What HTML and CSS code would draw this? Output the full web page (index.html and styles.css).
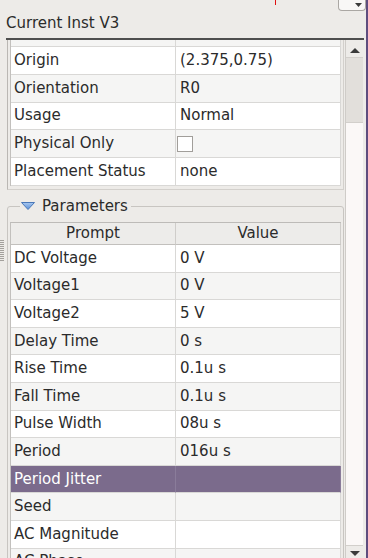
FILE: index.html
```html
<!DOCTYPE html>
<html lang="en">
<head>
    <meta charset="UTF-8">
    <title>Current Inst V3</title>
    <link rel="stylesheet" href="styles.css">
</head>
<body>
    <div class="window">
        <!--顶部下拉框-->
        <div class="topbar">
            <span class="tick"></span>
            <span class="combo">
                <svg width="7" height="4" viewBox="0 0 7 4"><polygon points="0,0 7,0 3.5,4" fill="#3a3a3a"/></svg>
            </span>
        </div>
        <div class="title">Current Inst V3</div>
        <div class="rule"></div>

        <div class="panel">
            <div class="grip-col"><div class="grip"></div></div>

            <div class="content">
                <!--实例属性-->
                <div class="props">
                    <table class="grid">
                        <tr class="stub alt"><td></td><td></td></tr>
                        <tr><td>Origin</td><td>(2.375,0.75)</td></tr>
                        <tr class="alt"><td>Orientation</td><td>R0</td></tr>
                        <tr><td>Usage</td><td>Normal</td></tr>
                        <tr class="alt"><td>Physical Only</td><td><span class="check"></span></td></tr>
                        <tr><td>Placement Status</td><td>none</td></tr>
                    </table>
                </div>

                <!--参数-->
                <fieldset class="group">
                    <legend>
                        <svg width="14" height="8" viewBox="0 0 14 8">
                            <defs>
                                <linearGradient id="tri" x1="0" y1="0" x2="0" y2="1">
                                    <stop offset="0" stop-color="#a9c8f0"/>
                                    <stop offset="1" stop-color="#5a8fd6"/>
                                </linearGradient>
                            </defs>
                            <polygon points="0.5,0.5 13.5,0.5 7,7.5" fill="url(#tri)" stroke="#4a78b8" stroke-width="1"/>
                        </svg>
                        Parameters
                    </legend>
                    <table class="grid params">
                        <tr class="head"><th>Prompt</th><th>Value</th></tr>
                        <tr><td>DC Voltage</td><td>0 V</td></tr>
                        <tr class="alt"><td>Voltage1</td><td>0 V</td></tr>
                        <tr><td>Voltage2</td><td>5 V</td></tr>
                        <tr class="alt"><td>Delay Time</td><td>0 s</td></tr>
                        <tr><td>Rise Time</td><td>0.1u s</td></tr>
                        <tr class="alt"><td>Fall Time</td><td>0.1u s</td></tr>
                        <tr><td>Pulse Width</td><td>08u s</td></tr>
                        <tr class="alt"><td>Period</td><td>016u s</td></tr>
                        <tr class="selected"><td>Period Jitter</td><td></td></tr>
                        <tr class="alt"><td>Seed</td><td></td></tr>
                        <tr><td>AC Magnitude</td><td></td></tr>
                        <tr class="alt"><td>AC Phase</td><td></td></tr>
                    </table>
                </fieldset>
            </div>

            <!--滚动条-->
            <div class="scrollbar">
                <div class="sb-up">
                    <svg width="10" height="5" viewBox="0 0 10 5"><polygon points="0,5 10,5 5,0" fill="#3a3a3a"/></svg>
                </div>
                <div class="sb-thumb"></div>
                <div class="sb-trough"></div>
                <div class="sb-down">
                    <svg width="10" height="5" viewBox="0 0 10 5"><polygon points="0,0 10,0 5,5" fill="#3a3a3a"/></svg>
                </div>
            </div>
        </div>
    </div>
</body>
</html>
```

FILE: styles.css
```css
*{
    margin: 0px;
    padding: 0px;
    box-sizing: border-box;
}
body{
    background-color: #edebe8;
    font-family: "DejaVu Sans", sans-serif;
    font-size: 15px;
    color: #2b2b2b;
}
.window{
    width: 368px;
    height: 558px;
    overflow: hidden;
    border-right: 2px solid #5e4d7e;
}

/*顶部*/
.topbar{
    height: 12px;
    display: flex;
}
.tick{
    width: 1px;
    height: 5px;
    margin-left: 275px;
    background-color: #e01010;
}
.combo{
    width: 28px;
    height: 11px;
    margin-left: auto;
    background-color: #f8f7f6;
    border: 1px solid #aaa7a3;
    border-top: none;
    border-radius: 0 0 4px 4px;
    display: flex;
    justify-content: flex-end;
    align-items: center;
    padding-right: 3px;
}
.title{
    height: 26px;
    padding-top: 2px;
    line-height: 18px;
    padding-left: 6px;
}
.rule{
    height: 2px;
    width: 358px;
    margin-left: 6px;
    background-color: #4e4e4e;
}

/*主体*/
.panel{
    height: 518px;
    display: flex;
}
.grip-col{
    width: 6px;
}
.grip{
    width: 4px;
    height: 22px;
    margin-top: 200px;
    background: repeating-linear-gradient(#a3a09c 0px, #a3a09c 1px, transparent 1px, transparent 2px);
}
.content{
    width: 339px;
    overflow: hidden;
}

/*表格*/
.grid{
    width: 331px;
    table-layout: fixed;
    border-collapse: separate;
    border-spacing: 0;
    border-left: 1px solid #c2c0bd;
    background-color: #fff;
}
.grid tr{
    height: 27.8px;
}
.params tr{
    height: 27.6px;
}
.grid td, .grid th{
    padding: 0 4px 0 3px;
    line-height: 17px;
    text-align: left;
    font-weight: normal;
    white-space: nowrap;
    overflow: hidden;
    border-right: 1px solid #d9d8d6;
    border-bottom: 1px solid #d9d8d6;
}
.grid td + td{
    padding-left: 4px;
}
.grid tr.alt td{
    background-color: #f5f5f4;
}
.grid tr.stub{
    height: 7px;
}
.grid tr.selected td{
    background-color: #7b6b8c;
    color: #fff;
    border-right-color: #8a7c9a;
}
.check{
    display: inline-block;
    width: 16px;
    height: 16px;
    margin-left: -3px;
    vertical-align: middle;
    background-color: #fff;
    border: 1px solid #a19e9a;
}
.props{
    width: 337px;
    margin-left: 1px;
    padding: 0 2px 3px 2px;
    border-left: 1px solid #bab7b3;
    border-right: 1px solid #d3d0cc;
    border-bottom: 1px solid #d3d0cc;
}

/*参数分组*/
.group{
    width: 337px;
    margin: 8px 0 0 1px;
    padding: 7px 2px 0 2px;
    border: 1px solid #c8c5c1;
    border-radius: 3px;
    min-width: 0;
}
.group legend{
    margin-left: 10px;
    padding: 0 3px 0 1px;
    line-height: 17px;
    display: flex;
    align-items: center;
    gap: 7px;
}
.params{
    border-top: 1px solid #bdbbb8;
}
.params tr.head{
    height: 22px;
}
.params tr.head th{
    text-align: center;
    padding: 0;
    background-color: #edecea;
    border-right-color: #cfcdca;
    border-bottom-color: #c2c0bd;
}

/*滚动条*/
.scrollbar{
    width: 18px;
    display: flex;
    flex-direction: column;
    border-left: 1px solid #cfccc8;
}
.sb-up{
    height: 17px;
    display: flex;
    justify-content: center;
    padding-top: 8px;
}
.sb-thumb{
    height: 66px;
    background-color: #e2dfdb;
    border-top: 1px solid #d2cfcb;
    border-bottom: 1px solid #d2cfcb;
}
.sb-trough{
    flex: 1;
    background-color: #fbf8f7;
}
.sb-down{
    height: 13px;
    display: flex;
    justify-content: center;
    padding-top: 5px;
    border-top: 1px solid #d2cfcb;
}
```
